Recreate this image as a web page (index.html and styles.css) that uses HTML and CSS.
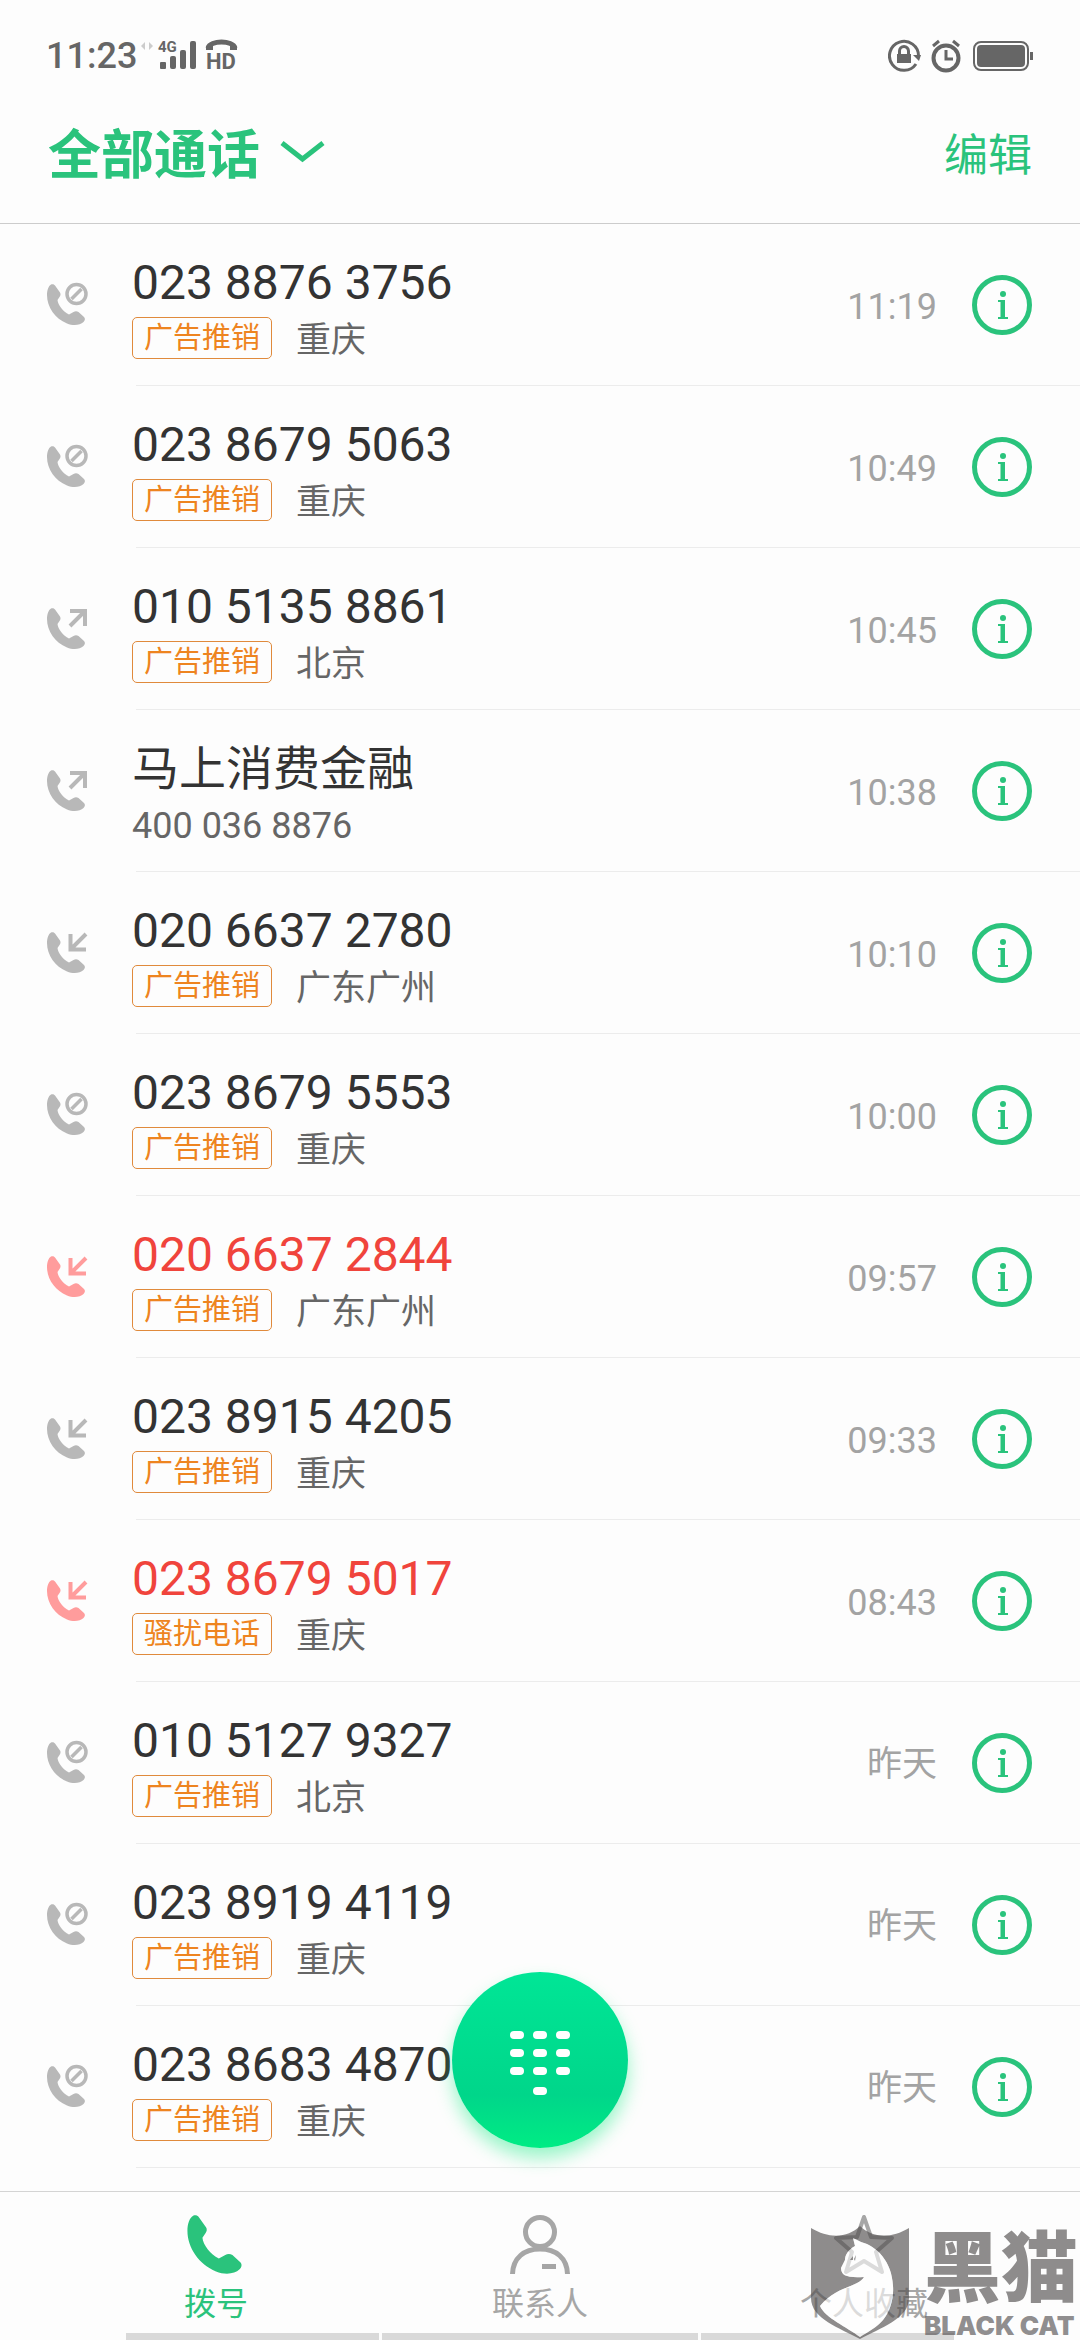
FILE: index.html
```html
<!DOCTYPE html>
<html lang="zh-CN">
<head>
<meta charset="utf-8">
<meta name="viewport" content="width=device-width, initial-scale=1">
<title>全部通话</title>
<link rel="stylesheet" href="styles.css">
</head>
<body>
<svg class="sprite" aria-hidden="true">
  <symbol id="handset" viewBox="0 0 42 46"><path fill="currentColor" d="M5 2.500C6 2 8 2 9 3.500L14 10.500C15 12 14.500 13.500 13.500 15L11.500 18C12 23 17 29.500 23 32.500L27.500 30C29 29 31 29 32.500 30L38 35C39.500 36.500 39 38.500 37.500 40C34 43.500 27 44 21 41.500C9 36.500 1 25 1 13C1 8 2.500 4 5 2.500Z"/></symbol>
  <symbol id="blocked" viewBox="0 0 42 46"><use href="#handset"/><g fill="none" stroke="currentColor" stroke-width="3.500"><circle cx="30.500" cy="12" r="9.500"/><path d="M25.500 17L35.500 7"/></g></symbol>
  <symbol id="outgoing" viewBox="0 0 42 46"><use href="#handset"/><path fill="none" stroke="currentColor" stroke-width="4" d="M24 5H39V20M24 20L38 6"/></symbol>
  <symbol id="incoming" viewBox="0 0 42 46"><use href="#handset"/><path fill="none" stroke="currentColor" stroke-width="4" d="M24.500 4V19.500H40M40 4L25.500 18.500"/></symbol>
  <symbol id="info" viewBox="0 0 60 60"><circle cx="30" cy="30" r="27.500" fill="none" stroke="currentColor" stroke-width="5"/><circle cx="31" cy="19" r="3" fill="currentColor"/><path fill="currentColor" d="M26 25h7v17H36v2H26v-2h2.500V27H26z"/></symbol>
</svg>

<div class="statusbar">
  <span class="clock">11:23</span>
  <svg class="signal" width="96" height="34" viewBox="0 0 96 34" aria-hidden="true">
    <g fill="#ccc"><path d="M0 7l4-4v8zM12 7l-4-4v8z"/></g>
    <text x="17" y="13" class="signal-label">4G</text>
    <g fill="#666"><rect x="19" y="23" width="6" height="7" rx="1"/><rect x="29" y="17" width="6" height="13" rx="2"/><rect x="39" y="11" width="6" height="19" rx="2"/><rect x="49" y="2" width="6" height="28" rx="2"/></g>
    <path d="M67 9C69 1 92 1 94 9" fill="none" stroke="#666" stroke-width="5"/><path d="M65 7h7v4h-7zM89 7h7v4h-7z" fill="#666"/>
    <text x="65" y="30" class="hd-label">HD</text>
  </svg>
  <svg class="device" width="146" height="34" viewBox="0 0 146 34" aria-hidden="true">
    <g fill="none" stroke="#666" stroke-width="3">
      <path d="M28 25A14.500 14.500 0 1 1 30.500 17"/>
      <path d="M11.500 16v-4a4.500 4.500 0 0 1 9 0v4"/>
      <circle cx="58" cy="19" r="12.500" stroke-width="4"/><path d="M58 11v9h7M45 7l6-5M71 7l-6-5"/>
      <rect x="86" y="3" width="54" height="28" rx="7" stroke-width="2"/>
    </g>
    <g fill="#666"><rect x="9" y="15" width="14" height="9"/><path d="M25 16h8l-2 6z"/><rect x="89" y="6" width="48" height="22" rx="4"/><rect x="142" y="13" width="3" height="8"/></g>
  </svg>
</div>

<header class="header">
  <button class="filter" type="button">全部通话
    <svg width="46" height="22" viewBox="0 0 46 22" aria-hidden="true"><path d="M2 2L22.500 18L43 2" fill="none" stroke="currentColor" stroke-width="5"/></svg>
  </button>
  <button class="edit" type="button">编辑</button>
</header>

<main class="main">
  <ul class="calls">
    <li class="call"><div class="row"><svg class="kind"><use href="#blocked"/></svg><div class="who"><div class="number">023 8876 3756</div><div class="meta"><span class="tag">广告推销</span><span class="place">重庆</span></div></div><time class="time">11:19</time><button class="info" type="button" aria-label="详情"><svg><use href="#info"/></svg></button></div></li>
    <li class="call"><div class="row"><svg class="kind"><use href="#blocked"/></svg><div class="who"><div class="number">023 8679 5063</div><div class="meta"><span class="tag">广告推销</span><span class="place">重庆</span></div></div><time class="time">10:49</time><button class="info" type="button" aria-label="详情"><svg><use href="#info"/></svg></button></div></li>
    <li class="call"><div class="row"><svg class="kind"><use href="#outgoing"/></svg><div class="who"><div class="number">010 5135 8861</div><div class="meta"><span class="tag">广告推销</span><span class="place">北京</span></div></div><time class="time">10:45</time><button class="info" type="button" aria-label="详情"><svg><use href="#info"/></svg></button></div></li>
    <li class="call"><div class="row"><svg class="kind"><use href="#outgoing"/></svg><div class="who"><div class="number name">马上消费金融</div><div class="meta"><span class="subnumber">400 036 8876</span></div></div><time class="time">10:38</time><button class="info" type="button" aria-label="详情"><svg><use href="#info"/></svg></button></div></li>
    <li class="call"><div class="row"><svg class="kind"><use href="#incoming"/></svg><div class="who"><div class="number">020 6637 2780</div><div class="meta"><span class="tag">广告推销</span><span class="place">广东广州</span></div></div><time class="time">10:10</time><button class="info" type="button" aria-label="详情"><svg><use href="#info"/></svg></button></div></li>
    <li class="call"><div class="row"><svg class="kind"><use href="#blocked"/></svg><div class="who"><div class="number">023 8679 5553</div><div class="meta"><span class="tag">广告推销</span><span class="place">重庆</span></div></div><time class="time">10:00</time><button class="info" type="button" aria-label="详情"><svg><use href="#info"/></svg></button></div></li>
    <li class="call missed"><div class="row"><svg class="kind"><use href="#incoming"/></svg><div class="who"><div class="number">020 6637 2844</div><div class="meta"><span class="tag">广告推销</span><span class="place">广东广州</span></div></div><time class="time">09:57</time><button class="info" type="button" aria-label="详情"><svg><use href="#info"/></svg></button></div></li>
    <li class="call"><div class="row"><svg class="kind"><use href="#incoming"/></svg><div class="who"><div class="number">023 8915 4205</div><div class="meta"><span class="tag">广告推销</span><span class="place">重庆</span></div></div><time class="time">09:33</time><button class="info" type="button" aria-label="详情"><svg><use href="#info"/></svg></button></div></li>
    <li class="call missed"><div class="row"><svg class="kind"><use href="#incoming"/></svg><div class="who"><div class="number">023 8679 5017</div><div class="meta"><span class="tag">骚扰电话</span><span class="place">重庆</span></div></div><time class="time">08:43</time><button class="info" type="button" aria-label="详情"><svg><use href="#info"/></svg></button></div></li>
    <li class="call"><div class="row"><svg class="kind"><use href="#blocked"/></svg><div class="who"><div class="number">010 5127 9327</div><div class="meta"><span class="tag">广告推销</span><span class="place">北京</span></div></div><time class="time day">昨天</time><button class="info" type="button" aria-label="详情"><svg><use href="#info"/></svg></button></div></li>
    <li class="call"><div class="row"><svg class="kind"><use href="#blocked"/></svg><div class="who"><div class="number">023 8919 4119</div><div class="meta"><span class="tag">广告推销</span><span class="place">重庆</span></div></div><time class="time day">昨天</time><button class="info" type="button" aria-label="详情"><svg><use href="#info"/></svg></button></div></li>
    <li class="call"><div class="row"><svg class="kind"><use href="#blocked"/></svg><div class="who"><div class="number">023 8683 4870</div><div class="meta"><span class="tag">广告推销</span><span class="place">重庆</span></div></div><time class="time day">昨天</time><button class="info" type="button" aria-label="详情"><svg><use href="#info"/></svg></button></div></li>
  </ul>
  <button class="dialpad" type="button" aria-label="拨号键盘">
    <svg width="60" height="66" viewBox="0 0 60 66" fill="#fff"><g id="keys"><rect width="14" height="8" rx="4"/><rect x="23" width="14" height="8" rx="4"/><rect x="46" width="14" height="8" rx="4"/></g><use href="#keys" y="18"/><use href="#keys" y="36"/><rect x="23" y="56" width="14" height="8" rx="4"/></svg>
  </button>
</main>

<footer class="footer">
  <nav class="tabs">
    <a class="tab active" href="#dial"><svg width="60" height="66" viewBox="0 0 42 46"><use href="#handset"/></svg>拨号</a>
    <a class="tab" href="#contacts"><svg width="60" height="66" viewBox="0 0 60 66"><g fill="none" stroke="currentColor" stroke-width="5"><circle cx="30" cy="20" r="14.500"/><path d="M2.500 62C3 46 14 37 30 37S57 46 57.500 62"/></g><path d="M32 52h14v5H32z" fill="currentColor"/></svg>联系人</a>
    <a class="tab" href="#favorites"><svg width="60" height="66" viewBox="0 0 60 66"><path d="M30 5L37 25L58 26L42 40L48 60L30 49L12 60L18 40L2 26L23 25Z" fill="none" stroke="currentColor" stroke-width="4" stroke-linejoin="round"/></svg>个人收藏</a>
  </nav>
  <div class="gesture"><i></i><i class="middle"></i><i></i></div>
  <div class="watermark">
    <svg width="98" height="114" viewBox="0 0 98 114" aria-hidden="true">
      <path class="ink" fill-rule="evenodd" d="M0 2C18 13 37 12 49 0C61 12 80 13 98 2V72C98 93 69 102 49 113C29 102 0 93 0 72ZM42 12L44 20C37 24 34 29 34 34L30 42C30 50 37 52 53 51C48 61 25 60 9 80C14 92 36 101 49 111C57 106 66 101 72 94C79 86 83 72 82 60C81 36 66 20 50 16Z"/>
      <path fill="#fff" fill-opacity=".6" d="M42 12L44 20C37 24 34 29 34 34L30 42C30 50 37 52 53 51C48 61 25 60 9 80C14 92 36 101 49 111C57 106 66 101 72 94C79 86 83 72 82 60C81 36 66 20 50 16Z"/>
      <path class="ink" d="M39 34l3-4v4zM43 33l2-4-1 6z"/>
    </svg>
    <div class="brand"><span class="brand-cn">黑猫</span><span class="brand-en">BLACK CAT</span></div>
  </div>
</footer>
</body>
</html>
```

FILE: styles.css
```css
* { box-sizing: border-box; }
body {
  margin: 0;
  min-height: 100vh;
  display: flex;
  flex-direction: column;
  background: #fdfdfd;
  color: #333;
  font-family: Roboto, "Noto Sans CJK SC", sans-serif;
}
button {
  padding: 0;
  border: 0;
  background: none;
  color: inherit;
  font: inherit;
}
svg { display: block; flex: none; }
.sprite { position: absolute; width: 0; height: 0; }

.statusbar {
  display: flex;
  align-items: center;
  height: 80px;
  padding: 32px 46px 0;
  color: #666;
}
.clock { font-size: 36px; line-height: 48px; font-weight: 500; }
.signal { margin-left: 4px; overflow: visible; }
.signal-label { font-size: 15px; font-weight: 700; fill: #666; }
.hd-label { font-size: 22px; font-weight: 700; fill: #666; }
.device { margin-left: auto; }

.header {
  display: flex;
  align-items: center;
  justify-content: space-between;
  height: 144px;
  padding: 8px 48px 0;
  border-bottom: 1px solid #ccc;
  color: #2ac37c;
}
.filter {
  display: flex;
  align-items: center;
  gap: 20px;
  font-size: 53px;
  line-height: 72px;
  font-weight: 700;
}
.filter svg { margin-bottom: 8px; }
.edit { font-size: 44px; line-height: 60px; }

.main { position: relative; flex: 1; }
.calls { margin: 0; padding: 0; list-style: none; }
.call::after {
  content: "";
  display: block;
  height: 1px;
  margin-left: 136px;
  background: #ececec;
}
.row {
  display: flex;
  align-items: center;
  padding: 0 48px 0 46px;
}
.kind { width: 42px; height: 46px; color: #b8b8b8; }
.who { flex: 1; margin-left: 44px; padding: 31px 0 20px; }
.number { font-size: 48px; line-height: 56px; }
.name { font-size: 47px; }
.meta {
  display: flex;
  align-items: center;
  gap: 24px;
  height: 54px;
  color: #666;
  font-size: 35px;
  line-height: 48px;
}
.place { padding-top: 6px; }
.subnumber { padding-top: 4px; font-size: 36px; }
.tag {
  padding: 0 11px;
  border: 1px solid #e08a3c;
  border-radius: 5px;
  color: #ee8420;
  font-size: 29px;
  line-height: 40px;
}
.time { margin-right: 35px; padding-top: 4px; color: #a3a3a3; font-size: 36px; line-height: 48px; }
.day { font-size: 35px; }
.info { color: #2ac37c; }
.info svg { width: 60px; height: 60px; }
.missed .number { color: #f0443c; }
.missed .kind { color: #ff9c9c; }

.dialpad {
  position: absolute;
  bottom: 43px;
  left: 50%;
  display: grid;
  place-items: center;
  width: 176px;
  height: 176px;
  margin-left: -88px;
  padding-top: 8px;
  border-radius: 50%;
  background: linear-gradient(#00e696, #00d68a 70%, #00ec84);
  box-shadow: 0 10px 18px rgba(0, 236, 120, .4);
}

.footer { position: relative; border-top: 1px solid #d4d4d4; }
.tabs { display: flex; padding: 20px 54px 3px; }
.tab {
  flex: 1;
  display: flex;
  flex-direction: column;
  align-items: center;
  color: #a6a6a6;
  font-size: 32px;
  line-height: 52px;
  text-decoration: none;
}
.active { color: #2ac37c; }
.gesture { display: flex; gap: 3px; height: 7px; padding: 0 126px; }
.gesture i { flex: 4; background: #d9d9d9; }
.gesture .middle { flex: 5; }

.watermark {
  position: absolute;
  right: 0;
  bottom: 0;
  display: flex;
  gap: 15px;
  color: rgba(80, 76, 77, .64);
}
.ink { fill: #504c4d; fill-opacity: .64; }
.brand { display: flex; flex-direction: column; width: 156px; padding-top: 2px; }
.brand-cn { font-size: 77px; line-height: 84px; font-weight: 900; white-space: nowrap; }
.brand-en { font-family: Inter, sans-serif; font-size: 26px; line-height: 28px; font-weight: 900; white-space: nowrap; }
```
